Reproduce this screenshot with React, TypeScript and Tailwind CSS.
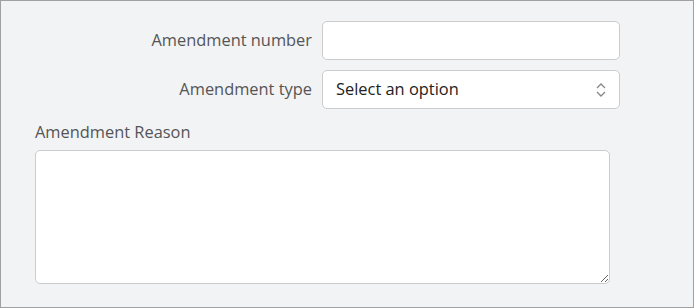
import React from "react";

export default function App() {
  return (
    <div className="w-[694px] h-[308px] border border-[#a0a0a0] bg-[#f2f3f5] pl-[34px] pt-[20px] font-['Open_Sans',sans-serif] text-[16.4px]">
      <div className="flex items-center">
        <label className="w-[277px] text-right text-[#555]">Amendment number</label>
        <input className="ml-[10px] w-[298px] h-[39px] bg-white border border-[#ccc] rounded-[5px] px-3 outline-none" />
      </div>
      <div className="flex items-center mt-[10px]">
        <label className="w-[277px] text-right text-[#555]">Amendment type</label>
        <div className="ml-[10px] w-[298px] h-[39px] bg-white border border-[#ccc] rounded-[5px] pl-[13px] pr-[12px] flex items-center justify-between text-[#222]">
          <span>Select an option</span>
          <svg width="12" height="18" viewBox="0 0 12 18" fill="none" stroke="#888" strokeWidth="1.3">
            <path d="M2 7 L6 3 L10 7" />
            <path d="M2 11 L6 15 L10 11" />
          </svg>
        </div>
      </div>
      <div className="mt-[13px] text-[#555] leading-[20px]">Amendment Reason</div>
      <textarea className="mt-[8px] block w-[575px] h-[134px] bg-white border border-[#ccc] rounded-[5px] outline-none resize" />
    </div>
  );
}
